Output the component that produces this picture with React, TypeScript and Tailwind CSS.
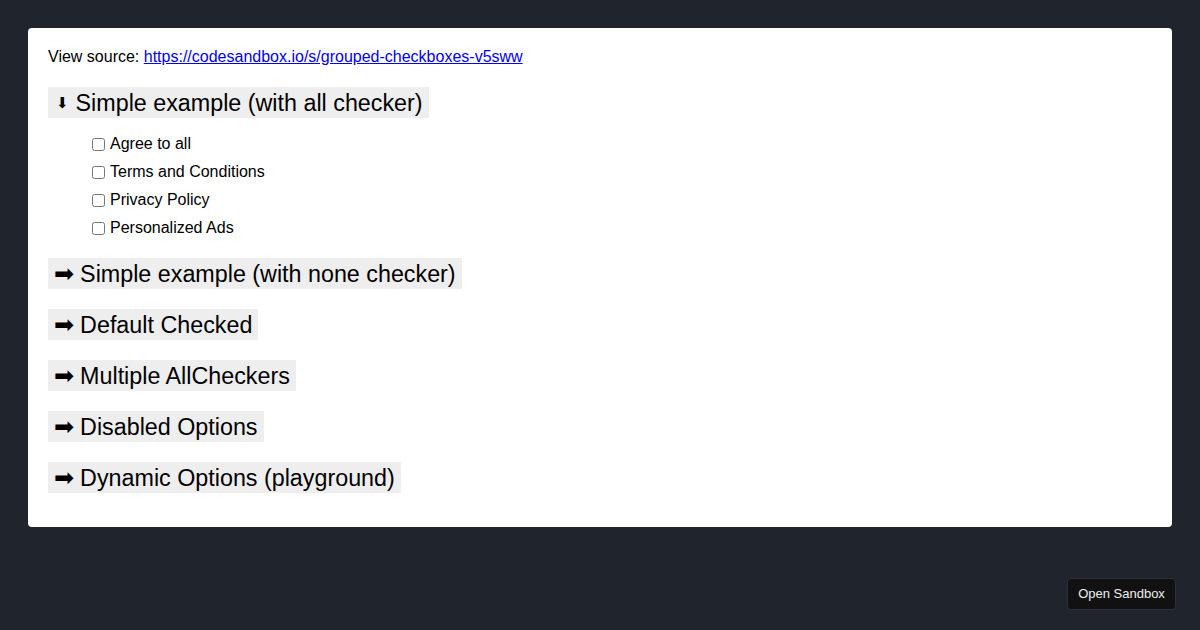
import React from 'react';

const options = ['Agree to all', 'Terms and Conditions', 'Privacy Policy', 'Personalized Ads'];

const sections = [
  'Simple example (with none checker)',
  'Default Checked',
  'Multiple AllCheckers',
  'Disabled Options',
  'Dynamic Options (playground)',
];

function Heading({ icon, title }: { icon: string; title: string }) {
  return (
    <h2 className="self-start bg-[#eeeeee] px-[6px] h-[31px] flex items-center text-[23.3px] leading-[28px] text-black">
      <span className="mr-[6px] text-[24px] font-['DejaVu_Sans',sans-serif]">{icon}</span>
      <span>{title}</span>
    </h2>
  );
}

export default function App() {
  return (
    <div className="relative min-h-[630px] bg-[#1f242d] p-[28px] font-['Liberation_Sans',Arial,sans-serif]">
      <div className="flex flex-col rounded-[4px] bg-white px-5 pt-5 pb-[34px]">
        <p className="text-[16px] leading-[18px] text-black">
          View source:{' '}
          <a href="#" className="text-[#0000ee] underline">
            https://codesandbox.io/s/grouped-checkboxes-v5sww
          </a>
        </p>

        <div className="mt-[21px] flex flex-col">
          <h2 className="self-start bg-[#eeeeee] px-[6px] h-[31px] flex items-center text-[23.3px] leading-[28px] text-black">
            <span className="mr-[7px] ml-[2px] text-[15px] font-['DejaVu_Sans',sans-serif]">⬇</span>
            <span>Simple example (with all checker)</span>
          </h2>
          <ul className="mt-[12px] ml-[44px] flex flex-col">
            {options.map((o) => (
              <li key={o} className="flex h-7 items-center text-[16px] text-black">
                <input type="checkbox" className="mr-[5px] h-[13px] w-[13px]" />
                <span>{o}</span>
              </li>
            ))}
          </ul>
        </div>

        <div className="mt-[16px] flex flex-col gap-5">
          {sections.map((s) => (
            <Heading key={s} icon="➡" title={s} />
          ))}
        </div>
      </div>

      <button className="absolute right-[24px] bottom-[20px] flex h-[32px] w-[109px] items-center justify-center rounded-[4px] border border-[#2e3138] bg-[#111111] text-[13px] text-[#eeeeee]">
        Open Sandbox
      </button>
    </div>
  );
}
